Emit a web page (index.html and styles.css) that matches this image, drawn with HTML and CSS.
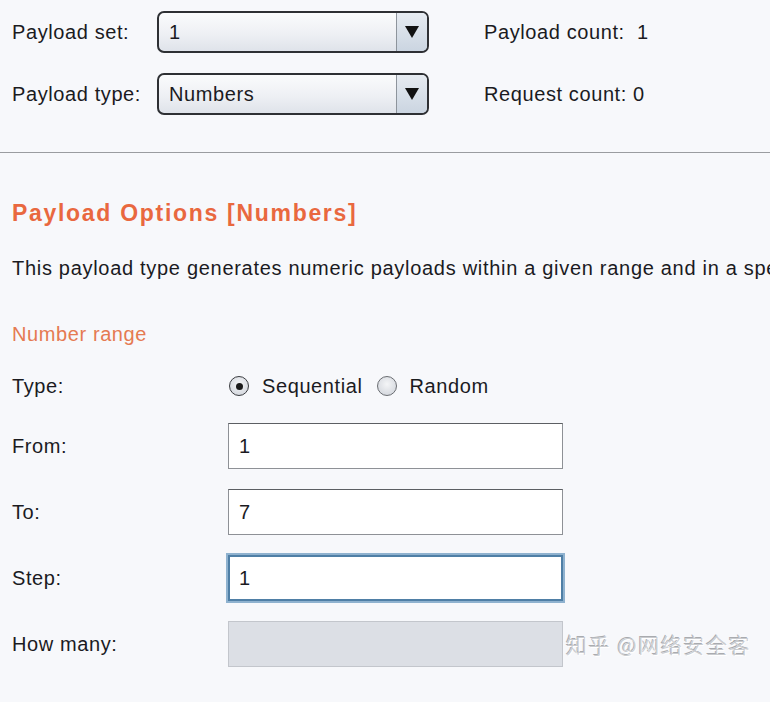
FILE: index.html
```html
<!DOCTYPE html>
<html lang="en">
	<head>
		<meta charset="UTF-8">
		<title>Payload Options</title>
		<link rel="stylesheet" href="styles.css">
	</head>
	<body>
		<div class="page">
			<!-- payload set / type -->
			<div class="top">
				<div class="label">Payload set:</div>
				<div class="select">
					<span class="value">1</span>
					<span class="arrow"><i></i></span>
				</div>
				<div></div>
				<div class="count">Payload count:&nbsp; 1</div>

				<div class="label">Payload type:</div>
				<div class="select">
					<span class="value">Numbers</span>
					<span class="arrow"><i></i></span>
				</div>
				<div></div>
				<div class="count">Request count:&nbsp;0</div>
			</div>

			<div class="options">
				<h2 class="title">Payload Options [Numbers]</h2>
				<p class="desc">This payload type generates numeric payloads within a given range and in a specified format.</p>
				<h3 class="sub">Number range</h3>

				<div class="form">
					<div class="label">Type:</div>
					<div class="radios">
						<span class="radio checked"></span><span class="rtext">Sequential</span>
						<span class="radio"></span><span class="rtext">Random</span>
					</div>

					<div class="label">From:</div>
					<div class="input">1</div>

					<div class="label">To:</div>
					<div class="input">7</div>

					<div class="label">Step:</div>
					<div class="input focus">1</div>

					<div class="label">How many:</div>
					<div class="input disabled"></div>
				</div>
			</div>

			<div class="mark">知乎 @网络安全客</div>
		</div>
	</body>
</html>
```
FILE: styles.css
```css
* {
	margin: 0;
	padding: 0;
	box-sizing: border-box;
}
body {
	background: #f7f8fb;
	font-family: "Liberation Sans", Arial, sans-serif;
	color: #1b1b1f;
	font-size: 20px;
	letter-spacing: 0.6px;
}
.page {
	width: 770px;
	height: 702px;
	overflow: hidden;
	position: relative;
}
.top {
	display: grid;
	grid-template-columns: 145px 272px 55px auto;
	grid-auto-rows: 42px;
	row-gap: 20px;
	align-items: center;
	padding: 11px 0 37px 12px;
	border-bottom: 1px solid #9a9ca0;
}
.select {
	height: 42px;
	display: flex;
	border: 2px solid #2e3034;
	border-radius: 7px;
	background: linear-gradient(#fafbfc, #eef0f4 55%, #dfe3ea);
	overflow: hidden;
}
.select .value {
	flex: 1;
	padding-left: 10px;
	line-height: 38px;
}
.select .arrow {
	width: 31px;
	border-left: 1px solid #8d949c;
	background: linear-gradient(#e6ebf1, #cbd5e1);
	display: flex;
	align-items: center;
	justify-content: center;
}
.select .arrow i {
	width: 0;
	height: 0;
	border-left: 7px solid transparent;
	border-right: 7px solid transparent;
	border-top: 12px solid #111;
}
.options {
	padding: 47px 0 0 12px;
}
.title {
	font-size: 23px;
	font-weight: bold;
	color: #e9683f;
	line-height: 26px;
	letter-spacing: 1.7px;
}
.desc {
	margin-top: 30px;
	line-height: 24px;
	white-space: nowrap;
	letter-spacing: 0.7px;
}
.sub {
	margin-top: 42px;
	font-size: 20px;
	font-weight: normal;
	color: #e57a52;
	line-height: 24px;
}
.form {
	margin-top: 23px;
	display: grid;
	grid-template-columns: 216px 335px;
	grid-template-rows: 34px repeat(4, 46px);
	row-gap: 20px;
	align-items: center;
}
.form .label {
	line-height: 24px;
}
.radios {
	display: flex;
	align-items: center;
	margin-left: 1px;
}
.radio {
	width: 20px;
	height: 20px;
	border-radius: 50%;
	border: 1px solid #6a6d72;
	background: radial-gradient(circle at 50% 40%, #f4f5f7, #cdd1d8);
	display: flex;
	align-items: center;
	justify-content: center;
}
.radio.checked {
	border-color: #3a3c40;
}
.radio.checked::after {
	content: "";
	width: 7px;
	height: 7px;
	border-radius: 50%;
	background: #1a1a1a;
}
.rtext {
	margin: 0 14px 0 13px;
}
.input {
	height: 46px;
	border: 1px solid #8e9196;
	border-top-color: #5c5f63;
	background: #fff;
	padding-left: 10px;
	line-height: 44px;
}
.input.focus {
	border: 2px solid #4f7fa6;
	box-shadow: 0 0 0 2px #8fb2cf;
	padding-left: 9px;
	line-height: 42px;
}
.input.disabled {
	background: #dcdfe5;
	border-color: #c3c6cc;
}
.mark {
	position: absolute;
	left: 566px;
	top: 629px;
	font-family: "Noto Sans CJK SC", sans-serif;
	font-size: 21px;
	font-weight: 300;
	color: #c9cbcf;
	text-shadow: 1px 1px 0 #fff, -1px -1px 0 #a9abaf;
	letter-spacing: 1.6px;
}
```
